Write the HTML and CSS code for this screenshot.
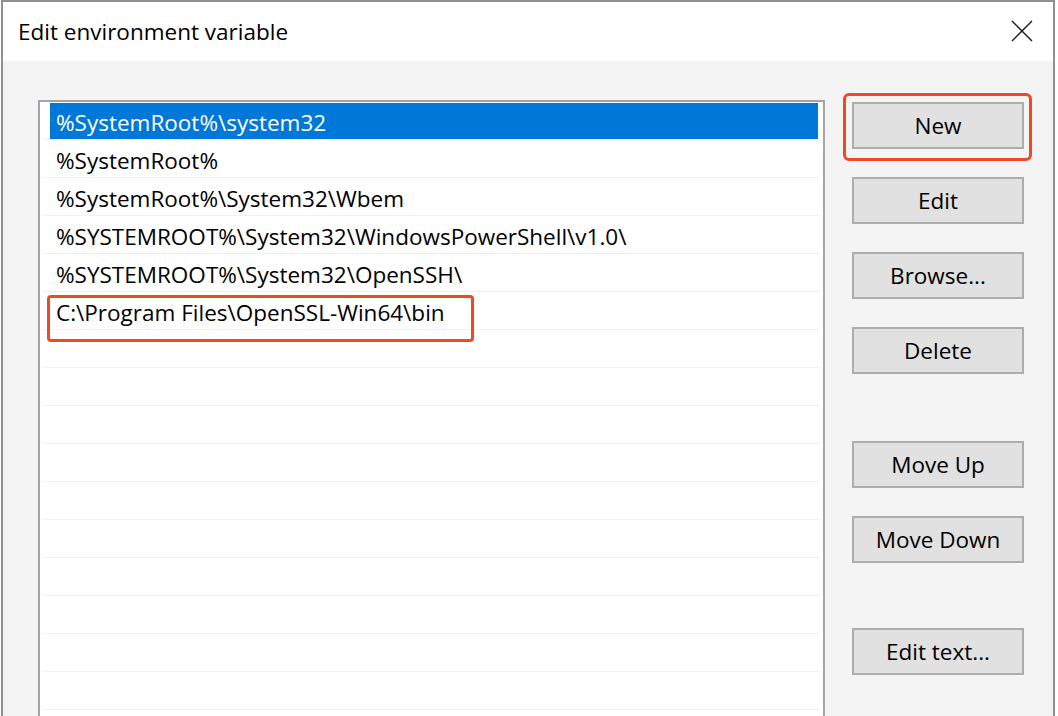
FILE: index.html
```html
<!DOCTYPE html>
<html lang="en">
<head>
  <meta charset="UTF-8">
  <title>Edit environment variable</title>
  <link rel="stylesheet" href="styles.css">
</head>
<body>
  <div class="window">
    <div class="titlebar">
      <span class="title">Edit environment variable</span>
      <span class="close">
        <svg width="22" height="22" viewBox="0 0 22 22"><path d="M1 1 L21 21 M21 1 L1 21" stroke="#1a1a1a" stroke-width="1.4" fill="none"/></svg>
      </span>
    </div>
    <div class="content">
      <div class="list">
        <div class="row selected"><span class="label">%SystemRoot%\system32</span></div>
        <div class="row"><span class="label">%SystemRoot%</span></div>
        <div class="row"><span class="label">%SystemRoot%\System32\Wbem</span></div>
        <div class="row"><span class="label">%SYSTEMROOT%\System32\WindowsPowerShell\v1.0\</span></div>
        <div class="row"><span class="label">%SYSTEMROOT%\System32\OpenSSH\</span></div>
        <div class="row"><span class="label">C:\Program Files\OpenSSL-Win64\bin</span><span class="mark"></span></div>
        <div class="row"><span class="label"></span></div>
        <div class="row"><span class="label"></span></div>
        <div class="row"><span class="label"></span></div>
        <div class="row"><span class="label"></span></div>
        <div class="row"><span class="label"></span></div>
        <div class="row"><span class="label"></span></div>
        <div class="row"><span class="label"></span></div>
        <div class="row"><span class="label"></span></div>
        <div class="row"><span class="label"></span></div>
        <div class="row"><span class="label"></span></div>
        <div class="row"><span class="label"></span></div>
      </div>
      <div class="buttons">
        <button class="btn marked">New</button>
        <button class="btn">Edit</button>
        <button class="btn">Browse...</button>
        <button class="btn">Delete</button>
        <button class="btn spaced">Move Up</button>
        <button class="btn">Move Down</button>
        <button class="btn spaced-small">Edit text...</button>
      </div>
    </div>
  </div>
</body>
</html>
```

FILE: styles.css
```css
html, body {
  margin: 0;
  height: 100%;
  overflow: hidden;
}

body {
  background: #fff;
  font-family: "Open Sans", "Noto Sans", sans-serif;
  color: #000;
}

.window {
  box-sizing: border-box;
  width: 1054px;
  height: 760px;
  margin-left: 1px;
  border: 2px solid #8f8f8f;
  border-bottom: none;
  display: flex;
  flex-direction: column;
}

.titlebar {
  height: 59px;
  flex: none;
  background: #fff;
  display: flex;
  align-items: center;
  justify-content: space-between;
  padding: 0 20px 0 15px;
}

.title {
  font-size: 22.5px;
  margin-top: 0;
}

.close {
  display: flex;
  margin-top: -2px;
}

.content {
  flex: 1;
  background: #f4f4f4;
  display: flex;
  align-items: flex-start;
  padding: 39px 29px 0 35px;
}

.list {
  box-sizing: border-box;
  width: 787px;
  height: 700px;
  flex: none;
  background: #fff;
  border: 2px solid #a4a4aa;
  padding: 0 3px 0 2px;
  overflow: hidden;
}

.row {
  position: relative;
  padding: 1px 2px 0 8px;
  border-bottom: 1px solid #f1f1f1;
}

.label {
  display: block;
  box-sizing: border-box;
  height: 36px;
  padding: 3px 0 0 6px;
  line-height: 33px;
  font-size: 22.5px;
  white-space: nowrap;
}

.row.selected .label {
  background: #0078d7;
  color: #fff;
}

/* red annotation boxes */
.mark {
  position: absolute;
  left: 5px;
  top: 3px;
  width: 427px;
  height: 47px;
  box-sizing: border-box;
  border: 3px solid #ef4a24;
  border-radius: 4px;
}

.buttons {
  display: flex;
  flex-direction: column;
  gap: 28px;
  margin-left: 27px;
  margin-top: 2px;
  width: 172px;
}

.btn {
  position: relative;
  height: 47px;
  border: 2px solid #adadad;
  background: #e1e1e1;
  font-family: inherit;
  font-size: 22.5px;
  color: #000;
  padding: 0;
}

.btn.spaced {
  margin-top: 39px;
}

.btn.spaced-small {
  margin-top: 37px;
}

.btn.marked::after {
  content: "";
  position: absolute;
  top: -11px;
  left: -11px;
  right: -10px;
  bottom: -14px;
  border: 3px solid #ef4a24;
  border-radius: 6px;
}
```
